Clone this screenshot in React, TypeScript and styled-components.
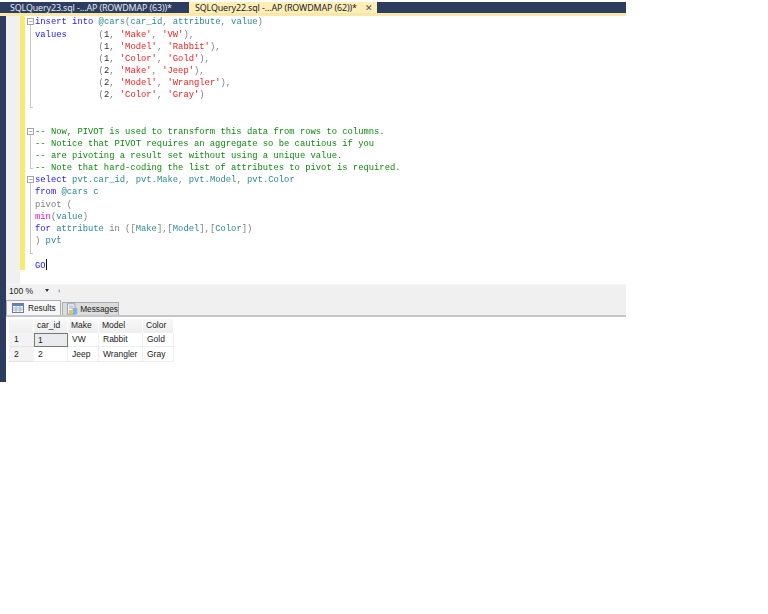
import React from "react";
import styled, { createGlobalStyle } from "styled-components";

const Global = createGlobalStyle`
  html, body { margin: 0; padding: 0; background: #fff; }
  body { width: 768px; height: 614px; overflow: hidden; font-family: "Open Sans", "Liberation Sans", sans-serif; }
`;

const Shell = styled.div`
  width: 620px;
  height: 380px;
  margin-top: 2px;
  border-left: 6px solid #2b3c5e;
  display: flex;
  flex-direction: column;
  background: #fff;
`;

const TabBar = styled.div`
  height: 11px;
  margin-left: -6px;
  padding-left: 10px;
  background: #2c3d60;
  display: flex;
  align-items: center;
  flex: none;
`;

const DocTab = styled.div<{ $active?: boolean }>`
  box-sizing: border-box;
  height: 11px;
  width: ${(p) => (p.$active ? "188px" : "179px")};
  padding: ${(p) => (p.$active ? "0 2px 0 6px" : "0")};
  display: flex;
  align-items: center;
  justify-content: space-between;
  font-family: "Noto Sans", "Liberation Sans", sans-serif;
  font-size: 8.9px;
  letter-spacing: -0.12px;
  white-space: nowrap;
  color: ${(p) => (p.$active ? "#20232b" : "#e3e8f2")};
  background: ${(p) => (p.$active ? "#fdeeb6" : "transparent")};
`;

const CloseMark = styled.span`
  width: 12px;
  display: inline-flex;
  justify-content: center;
  color: #4b5261;
`;

const AccentLine = styled.div`
  height: 3px;
  margin-left: -6px;
  flex: none;
  background: linear-gradient(#f3e6ae, #fde9a5);
`;

const Editor = styled.div`
  height: 268px;
  flex: none;
  display: flex;
  background: #fff;
`;

const SelectionMargin = styled.div`
  width: 14px;
  background: #f0f0f0;
  flex: none;
`;

const CodePane = styled.div`
  flex: 1;
  display: flex;
  flex-direction: column;
  padding-top: 0.4px;
`;

const ChangeBar = styled.div`
  width: 5px;
  height: 254px;
  background: #f7ea6c;
  flex: none;
`;

const Line = styled.div`
  height: 12.15px;
  display: flex;
  align-items: center;
  flex: none;
`;

const Fold = styled.div<{ $kind: string }>`
  position: relative;
  width: 10px;
  height: 100%;
  flex: none;
  &::before {
    content: "";
    display: ${(p) => (p.$kind === "none" ? "none" : "block")};
    position: absolute;
    left: 5px;
    top: ${(p) => (p.$kind === "open" ? "6px" : "0")};
    height: ${(p) => (p.$kind === "end" ? "7px" : "100%")};
    width: 1px;
    background: #c6c6c6;
  }
  &::after {
    content: ${(p) => (p.$kind === "open" ? '"−"' : '""')};
    display: ${(p) => (p.$kind === "open" || p.$kind === "end" ? "flex" : "none")};
    position: absolute;
    align-items: center;
    justify-content: center;
    left: ${(p) => (p.$kind === "open" ? "2px" : "5px")};
    top: ${(p) => (p.$kind === "open" ? "2px" : "6px")};
    width: ${(p) => (p.$kind === "open" ? "5px" : "3px")};
    height: ${(p) => (p.$kind === "open" ? "5px" : "1px")};
    border: ${(p) => (p.$kind === "open" ? "1px solid #a4a4a4" : "0")};
    background: ${(p) => (p.$kind === "open" ? "#fff" : "#c6c6c6")};
    color: #666;
    font: 7px/5px "Liberation Sans", sans-serif;
  }
`;

const Code = styled.pre`
  margin: 0;
  font-family: "Liberation Mono", monospace;
  font-size: 8.84px;
  line-height: 12px;
  color: #7f7f7f;
  white-space: pre;
  filter: blur(0.25px);
`;

const Kw = styled.span`color: #1a1aff;`;
const Var = styled.span`color: #2b8a94;`;
const Str = styled.span`color: #f01c1c;`;
const Cmt = styled.span`color: #118a11;`;
const Fn = styled.span`color: #f010d0;`;
const Num = styled.span`color: #333;`;

const Flagged = styled.span`
  position: relative;
  color: #2b8a94;
  &::after {
    content: "";
    position: absolute;
    left: 12px;
    top: 0;
    width: 1px;
    height: 1px;
    background: #f01c1c;
  }
`;

const Caret = styled.span`
  display: inline-block;
  width: 1px;
  height: 11px;
  background: #101030;
  vertical-align: -2px;
`;

const ZoomStrip = styled.div`
  height: 15px;
  box-sizing: border-box;
  padding: 0 0 3px 3px;
  flex: none;
  display: flex;
  align-items: center;
  gap: 6px;
  background: #f0f0f0;
  border-top: 1px solid #f6f6f6;
  font-family: "Liberation Sans", sans-serif;
  font-size: 8.5px;
  color: #222;
`;

const ZoomCaret = styled.span`
  width: 0;
  height: 0;
  margin-left: 6px;
  border: 2px solid transparent;
  border-top: 3px solid #333;
  border-bottom: 0;
`;

const ScrollArrow = styled.span`
  width: 0;
  height: 0;
  margin-left: 3px;
  border: 2px solid transparent;
  border-right: 2px solid #aaa;
  border-left: 0;
`;

const TabStrip = styled.div`
  height: 18px;
  flex: none;
  display: flex;
  align-items: flex-end;
  padding-top: 2px;
  box-sizing: border-box;
  gap: 1px;
  background: #f0f0f0;
  border-bottom: 2px solid #c4c6cc;
`;

const ResultTab = styled.div<{ $active?: boolean }>`
  height: ${(p) => (p.$active ? "15px" : "13px")};
  width: ${(p) => (p.$active ? "55px" : "57px")};
  box-sizing: border-box;
  display: flex;
  align-items: center;
  gap: ${(p) => (p.$active ? "4px" : "2px")};
  padding-left: ${(p) => (p.$active ? "5px" : "3px")};
  border: 1px solid #a9abb2;
  border-bottom: 0;
  background: ${(p) => (p.$active ? "#f7f7f7" : "#dcdcdc")};
  font-family: "Liberation Sans", sans-serif;
  font-size: 8.3px;
  color: #222;
`;

const GridArea = styled.div`
  flex: 1;
  padding: 2px 0 0 3px;
  background: #fff;
`;

const ResultGrid = styled.div`
  display: grid;
  width: 165px;
  grid-template-columns: 25px 34px 31px 44px 31px;
  grid-template-rows: 13.5px 14.5px 14.5px;
  font-family: "Liberation Sans", sans-serif;
  font-size: 8.5px;
  color: #222;
`;

const Head = styled.div`
  display: flex;
  align-items: center;
  padding: 0 0 1px 3px;
  background: linear-gradient(#f8f8f8, #eeeeee);
  border-right: 1px solid #fff;
`;

const RowHead = styled.div`
  display: flex;
  align-items: center;
  padding-left: 5px;
  background: #f3f3f3;
  border-bottom: 1px solid #e4e4e4;
`;

const Cell = styled.div<{ $selected?: boolean }>`
  display: flex;
  align-items: center;
  padding-left: 4px;
  border-right: 1px solid #eceff2;
  border-bottom: 1px solid #eceff2;
  ${(p) =>
    p.$selected
      ? "background:#e8ecef; border:1px solid #777; padding-left:3px;"
      : ""}
`;

type L = { f: string; c?: React.ReactNode };

const lines: L[] = [
  { f: "open", c: <><Kw>insert into</Kw> <Var>@cars</Var>(<Var>car_id</Var>, <Var>attribute</Var>, <Var>value</Var>)</> },
  { f: "mid", c: <><Kw>values</Kw>      (<Num>1</Num>, <Str>'Make'</Str>, <Str>'VW'</Str>),</> },
  { f: "mid", c: <>            (<Num>1</Num>, <Str>'Model'</Str>, <Str>'Rabbit'</Str>),</> },
  { f: "mid", c: <>            (<Num>1</Num>, <Str>'Color'</Str>, <Str>'Gold'</Str>),</> },
  { f: "mid", c: <>            (<Num>2</Num>, <Str>'Make'</Str>, <Str>'Jeep'</Str>),</> },
  { f: "mid", c: <>            (<Num>2</Num>, <Str>'Model'</Str>, <Str>'Wrangler'</Str>),</> },
  { f: "mid", c: <>            (<Num>2</Num>, <Str>'Color'</Str>, <Str>'Gray'</Str>)</> },
  { f: "end" },
  { f: "none" },
  { f: "open", c: <Cmt>-- Now, PIVOT is used to transform this data from rows to columns.</Cmt> },
  { f: "mid", c: <Cmt>-- Notice that PIVOT requires an aggregate so be cautious if you</Cmt> },
  { f: "mid", c: <Cmt>-- are pivoting a result set without using a unique value.</Cmt> },
  { f: "end", c: <Cmt>-- Note that hard-coding the list of attributes to pivot is required.</Cmt> },
  { f: "open", c: <><Kw>select</Kw> <Var>pvt.car_id</Var>, <Var>pvt.Make</Var>, <Var>pvt.Model</Var>, <Var>pvt.Color</Var></> },
  { f: "mid", c: <><Kw>from</Kw> <Var>@cars c</Var></> },
  { f: "mid", c: <>pivot (</> },
  { f: "mid", c: <><Fn>min</Fn>(<Var>value</Var>)</> },
  { f: "mid", c: <><Kw>for</Kw> <Var>attribute</Var> in ([<Var>Make</Var>],[<Var>Model</Var>],[<Var>Color</Var>])</> },
  { f: "mid", c: <>) <Flagged>pvt</Flagged></> },
  { f: "end" },
  { f: "none", c: <><Kw>GO</Kw><Caret /></> },
];

const TableIcon = () => (
  <svg width="12" height="10" viewBox="0 0 12 10">
    <rect x="0.5" y="0.5" width="11" height="9" fill="#fff" stroke="#6b7f9c" />
    <rect x="1" y="1" width="10" height="2" fill="#5b84b8" />
    <path d="M4 3v6M8 3v6M1 5h10M1 7h10" stroke="#9fb2c9" strokeWidth="1" />
  </svg>
);

const MessageIcon = () => (
  <svg width="13" height="12" viewBox="0 0 13 12">
    <rect x="1.5" y="0.5" width="8" height="11" fill="#fff" stroke="#8f9aa8" />
    <path d="M3 3h5M3 5h5" stroke="#8aa3bf" />
    <rect x="7" y="5" width="5" height="6.5" fill="#7fb4d8" />
    <rect x="3" y="7" width="4" height="4.5" fill="#e2c25a" />
  </svg>
);

export default function App() {
  return (
    <>
      <Global />
      <Shell>
        <TabBar>
          <DocTab>SQLQuery23.sql -...AP (ROWDMAP (63))*</DocTab>
          <DocTab $active>
            SQLQuery22.sql -...AP (ROWDMAP (62))*
            <CloseMark>✕</CloseMark>
          </DocTab>
        </TabBar>
        <AccentLine />
        <Editor>
          <SelectionMargin />
          <ChangeBar />
          <CodePane>
            {lines.map((l, i) => (
              <Line key={i}>
                <Fold $kind={l.f} />
                <Code>{l.c}</Code>
              </Line>
            ))}
          </CodePane>
        </Editor>
        <ZoomStrip>
          100 %
          <ZoomCaret />
          <ScrollArrow />
        </ZoomStrip>
        <TabStrip>
          <ResultTab $active>
            <TableIcon />
            Results
          </ResultTab>
          <ResultTab>
            <MessageIcon />
            Messages
          </ResultTab>
        </TabStrip>
        <GridArea>
          <ResultGrid>
            <Head />
            <Head>car_id</Head>
            <Head>Make</Head>
            <Head>Model</Head>
            <Head>Color</Head>
            <RowHead>1</RowHead>
            <Cell $selected>1</Cell>
            <Cell>VW</Cell>
            <Cell>Rabbit</Cell>
            <Cell>Gold</Cell>
            <RowHead>2</RowHead>
            <Cell>2</Cell>
            <Cell>Jeep</Cell>
            <Cell>Wrangler</Cell>
            <Cell>Gray</Cell>
          </ResultGrid>
        </GridArea>
      </Shell>
    </>
  );
}
